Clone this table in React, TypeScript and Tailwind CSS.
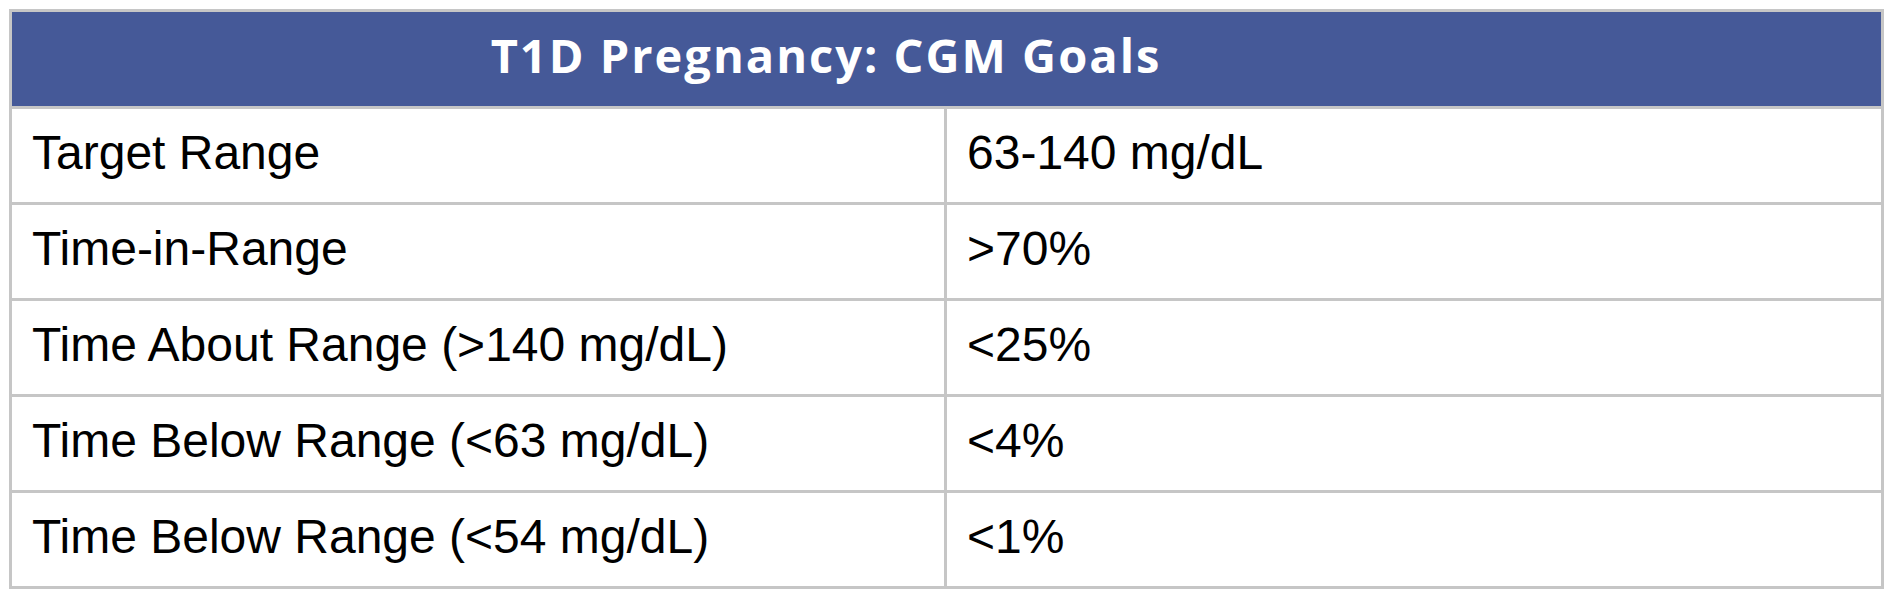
import React from "react";

const rows: [string, string][] = [
  ["Target Range", "63-140 mg/dL"],
  ["Time-in-Range", ">70%"],
  ["Time About Range (>140 mg/dL)", "<25%"],
  ["Time Below Range (<63 mg/dL)", "<4%"],
  ["Time Below Range (<54 mg/dL)", "<1%"],
];

export default function App() {
  return (
    <div className="w-[1896px] h-[598px] bg-white pt-[9px] pl-[9px]">
      <div className="w-[1875px] border-[3px] border-[#c6c6c6]">
        <div className="h-[97px] bg-[#455998] border-b-[3px] border-[#c6c6c6] flex items-center justify-center pr-[241px] pb-[9px]">
          <span
            className="text-white font-bold text-[47px] leading-[52px] tracking-[2px]"
            style={{ fontFamily: '"Open Sans", "DejaVu Sans", sans-serif' }}
          >
            T1D Pregnancy: CGM Goals
          </span>
        </div>
        {rows.map(([a, b], i) => (
          <div
            key={i}
            className={
              i < rows.length - 1
                ? "flex h-[96px] border-b-[3px] border-[#c6c6c6]"
                : "flex h-[93px]"
            }
          >
            <div
              className="w-[935px] border-r-[3px] border-[#c6c6c6] pl-[20px] pt-[18px] text-[48px] leading-[52px] text-black"
              style={{ fontFamily: '"Liberation Sans", Arial, sans-serif' }}
            >
              {a}
            </div>
            <div
              className="flex-1 pl-[20px] pt-[18px] text-[48px] leading-[52px] text-black"
              style={{ fontFamily: '"Liberation Sans", Arial, sans-serif' }}
            >
              {b}
            </div>
          </div>
        ))}
      </div>
    </div>
  );
}
